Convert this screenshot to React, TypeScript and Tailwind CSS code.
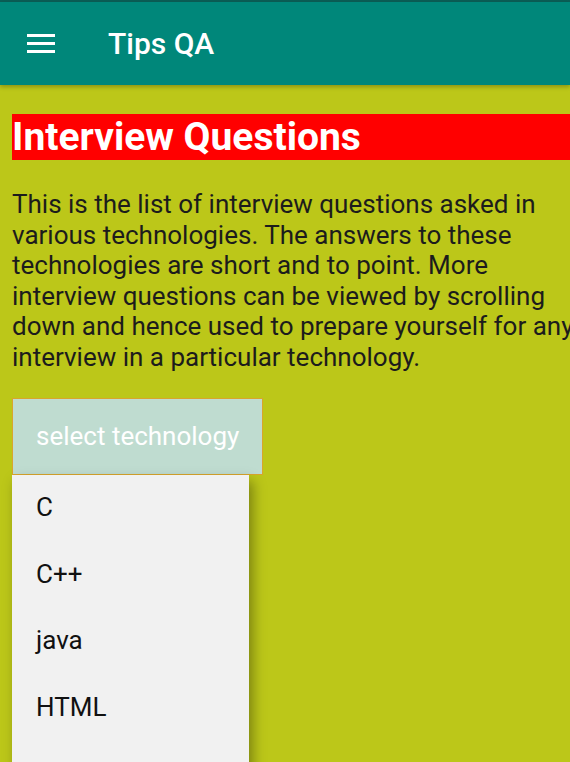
import React from 'react';

const TECHNOLOGIES = ['C', 'C++', 'java', 'HTML', 'CSS'];

export default function App() {
  return (
    <div
      className="relative w-[570px] h-[762px] overflow-hidden bg-[#bcc719]"
      style={{ fontFamily: 'Roboto, "Noto Sans", sans-serif' }}
    >
      {/* Toolbar */}
      <div className="h-[2px] bg-[#0b5e56]" />
      <div className="h-[83px] bg-[#00877a] flex items-center shadow-[0_2px_4px_rgba(0,0,0,0.25)]">
        <div className="ml-[27px] w-[28px] flex flex-col gap-[5px]">
          <span className="block h-[3px] bg-white" />
          <span className="block h-[3px] bg-white" />
          <span className="block h-[3px] bg-white" />
        </div>
        <div className="ml-[53px] text-white text-[30px] font-medium leading-none">Tips QA</div>
      </div>

      {/* Content */}
      <div className="pl-[12px] pt-[29px] w-[620px]">
        <div className="h-[46px] bg-[#ff0000] flex items-center">
          <h1 className="text-white font-bold text-[39px] leading-none">Interview Questions</h1>
        </div>
        <p className="mt-[29px] w-[578px] text-[26px] leading-[30.6px] text-[#1c1c1c]">
          This is the list of interview questions asked in various technologies. The answers to these
          technologies are short and to point. More interview questions can be viewed by scrolling down
          and hence used to prepare yourself for any interview in a particular technology.
        </p>

        <div className="relative mt-[25px] w-[251px]">
          <div className="h-[77px] bg-[#bfdcd0] border border-[#d9a52c] flex items-center pl-[23px]">
            <span className="text-white text-[26px]">select technology</span>
          </div>
          <ul className="absolute left-0 top-[77px] w-[237px] bg-[#f1f1f1] shadow-[4px_6px_12px_rgba(0,0,0,0.35)]">
            {TECHNOLOGIES.map((t) => (
              <li key={t} className="h-[66.5px] flex items-center pl-[24px] text-[26px] text-[#111]">
                {t}
              </li>
            ))}
          </ul>
        </div>
      </div>
    </div>
  );
}
